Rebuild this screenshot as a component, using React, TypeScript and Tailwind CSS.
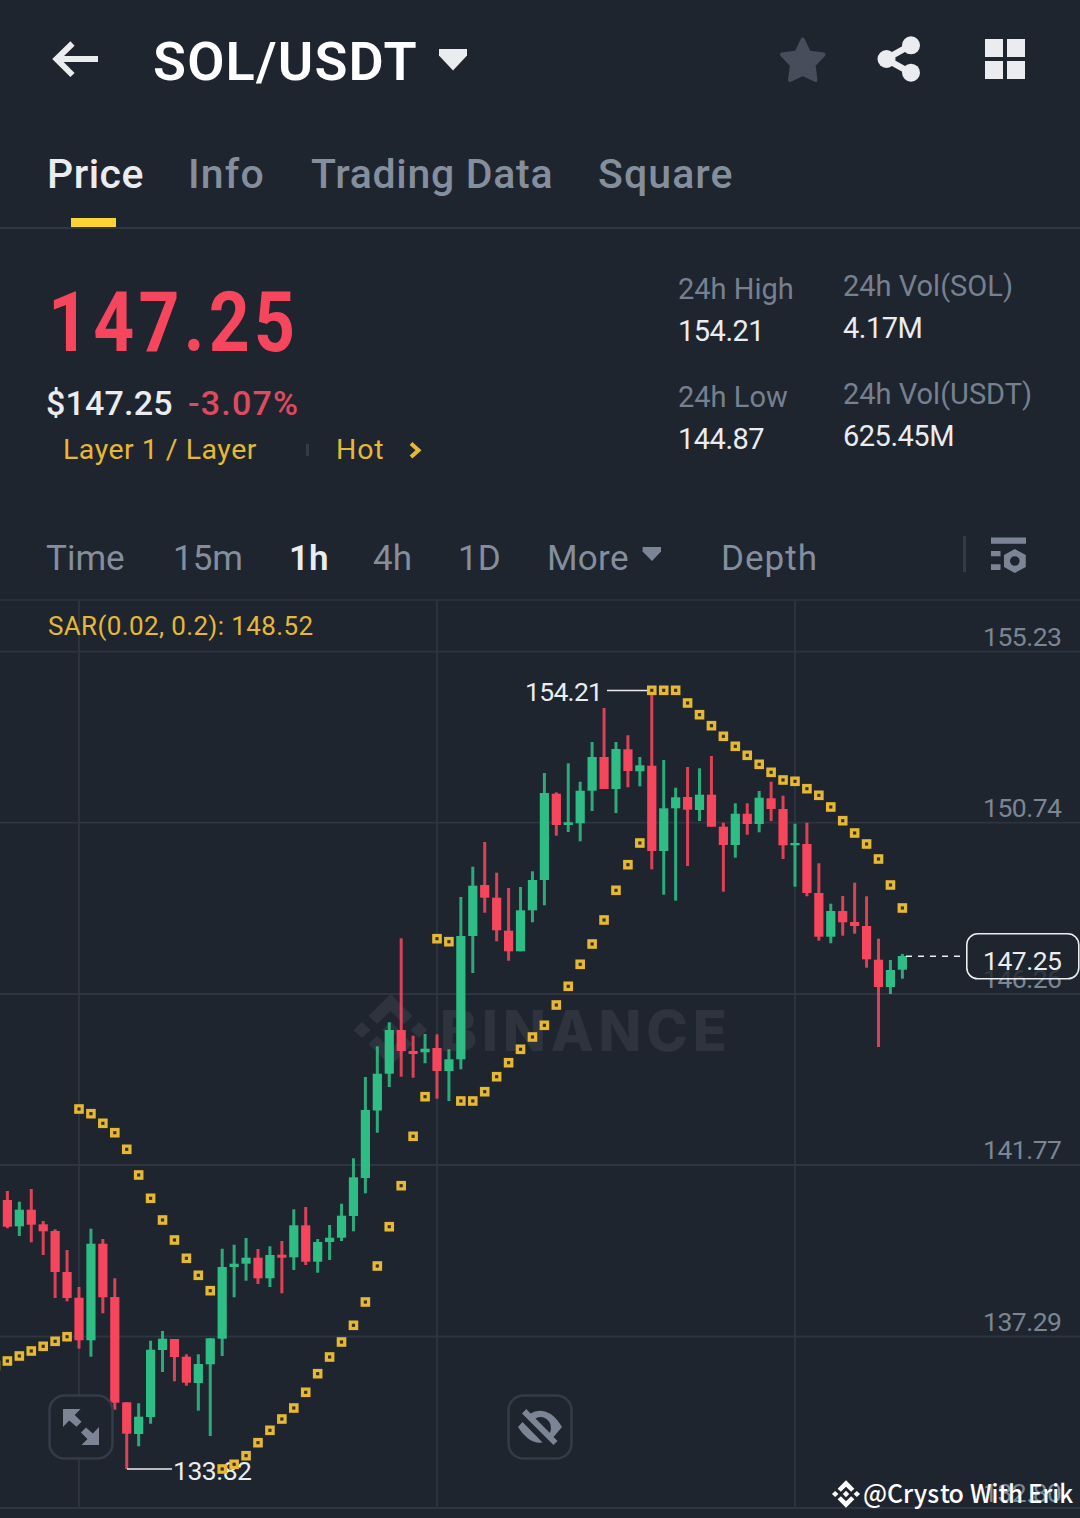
import clsx from 'clsx';

type Candle = [dir: 'u' | 'd', high: number, top: number, bottom: number, low: number];

const UP = '#2ebd85';
const DOWN = '#f6465d';
const GOLD = '#e5b935';
const BG = '#1f252f';
const GRID = '#2f3540';

const STEP = 11.933;
const xAt = (i: number) => 7.4 + STEP * i;

const candles: Candle[] = [
  ['d', 1191, 1200, 1226.7, 1228.3],
  ['u', 1201.7, 1209.7, 1226.3, 1236],
  ['d', 1189, 1209.7, 1224.7, 1242.3],
  ['d', 1221, 1224.3, 1231.3, 1255],
  ['d', 1229.3, 1231, 1272, 1298],
  ['d', 1250, 1272, 1298, 1301.3],
  ['d', 1287, 1297.7, 1340.3, 1348.7],
  ['u', 1228.7, 1243.7, 1340.3, 1356.7],
  ['d', 1239, 1243.7, 1297.3, 1313.3],
  ['d', 1278.3, 1297, 1402.7, 1409.7],
  ['d', 1402.3, 1402.3, 1433.7, 1469],
  ['u', 1403.3, 1416.7, 1434, 1446.3],
  ['u', 1340.7, 1349.7, 1417, 1423.7],
  ['u', 1331, 1338.7, 1350, 1372],
  ['d', 1339, 1339, 1357, 1381.3],
  ['d', 1354.3, 1356.7, 1382.7, 1385.7],
  ['u', 1354.3, 1364, 1383, 1410.7],
  ['u', 1338.3, 1338.3, 1364.3, 1436],
  ['u', 1248.7, 1267, 1338.7, 1356],
  ['u', 1244.7, 1263.7, 1267, 1297.3],
  ['u', 1238, 1257.7, 1263.7, 1280.7],
  ['d', 1249, 1257.7, 1278.3, 1284],
  ['u', 1246.3, 1255, 1278.3, 1287],
  ['d', 1241, 1254.7, 1257.7, 1293.3],
  ['u', 1209.3, 1225.3, 1257.3, 1270],
  ['d', 1207, 1225.3, 1261.7, 1265],
  ['u', 1239, 1242, 1261.7, 1272.7],
  ['u', 1225, 1237.7, 1242, 1260],
  ['u', 1203.7, 1215.7, 1237.7, 1241],
  ['u', 1158.3, 1177.3, 1216, 1231.3],
  ['u', 1077, 1110, 1178, 1193.3],
  ['u', 1046.3, 1073.7, 1110.5, 1132.7],
  ['u', 1022.3, 1030, 1073.7, 1087],
  ['d', 938.3, 1030, 1051, 1076.7],
  ['d', 1035.7, 1051, 1054, 1077.7],
  ['u', 1034, 1048.7, 1052.3, 1063.3],
  ['d', 1034.3, 1048, 1071, 1098.7],
  ['u', 1049.3, 1059.3, 1071, 1101],
  ['u', 897, 936, 1059.3, 1069.3],
  ['u', 866.7, 885.7, 936, 973],
  ['d', 842, 885, 897.7, 912.7],
  ['d', 872.7, 897.7, 930.3, 941.3],
  ['d', 888, 930.7, 951.3, 960.7],
  ['u', 887, 910.3, 951.3, 951.3],
  ['u', 871.3, 880, 910.3, 922.3],
  ['u', 773, 793, 880, 905.3],
  ['d', 792.3, 793.7, 825, 835.7],
  ['u', 763.3, 822.3, 825, 832],
  ['u', 781.7, 790.7, 823.3, 841.3],
  ['u', 742, 757, 790.7, 811],
  ['d', 708, 757, 789, 789],
  ['u', 742, 749, 789, 813],
  ['d', 735.3, 749.3, 771, 787.3],
  ['u', 757, 765.3, 771.3, 786.3],
  ['d', 690.7, 765.7, 851, 869.3],
  ['u', 760, 808.3, 851, 894.7],
  ['u', 787.7, 797.3, 808.3, 900.7],
  ['d', 767, 797, 809.7, 866],
  ['u', 768.3, 794.7, 810, 821],
  ['d', 756, 794.7, 826.7, 826.7],
  ['d', 822.7, 826.7, 845, 891.7],
  ['u', 803.3, 813.7, 845, 857.7],
  ['d', 803.3, 813.7, 824, 834.7],
  ['u', 791, 797.7, 824, 832.3],
  ['d', 781.7, 798.3, 809, 821],
  ['d', 795.7, 809, 845.3, 859],
  ['u', 823.7, 843, 845.3, 886.7],
  ['d', 822.7, 844, 893, 896.3],
  ['d', 863.3, 893, 936.7, 940.7],
  ['u', 903.7, 911, 936.7, 943.3],
  ['d', 896, 911, 922.3, 935.7],
  ['d', 882.7, 922, 926, 933.7],
  ['d', 896.3, 926, 959.3, 967.7],
  ['d', 938.7, 959.7, 987, 1047],
  ['u', 960, 970, 987, 994],
  ['u', 954, 956, 969.7, 978.7],
];

// parabolic SAR, starting one step left of the first candle
const sar = [
  1365.5, 1361, 1356, 1351, 1346.3, 1341.3, 1336.7,
  1109, 1113.7, 1123.3, 1132.7, 1149.3, 1175, 1198.3, 1220, 1240, 1258.3, 1275.3, 1290.7,
  1469, 1464.3, 1455.7, 1442.7, 1430.3, 1419, 1408, 1392.3, 1373.7, 1357, 1342, 1325.3, 1302, 1266, 1226.7, 1185.7, 1136.3, 1096.7,
  938.7, 941.7,
  1101, 1101, 1091.7, 1076.7, 1062.7, 1049.3, 1037, 1025.3, 1005, 986.3, 964.3, 944, 920, 890.3, 864.7, 843,
  690.3, 690.3, 690.3, 703, 714.7, 725.7, 736.3, 746.3, 755.3, 764.3, 772.3, 780, 781.3, 788.7, 795.3, 807, 820.7, 833, 844, 859, 885, 908,
];

const gridLines = [
  { y: 651.7, label: '155.23' },
  { y: 822.7, label: '150.74' },
  { y: 994, label: '146.26' },
  { y: 1165, label: '141.77' },
  { y: 1336.5, label: '137.29' },
  { y: 1508, label: '132.80' },
];

const tabs = [
  { label: 'Price', cls: 'w-[141px] tracking-[0.5px]' },
  { label: 'Info', cls: 'w-[123px] tracking-[1.2px]' },
  { label: 'Trading Data', cls: 'w-[287px] tracking-[0.7px]' },
  { label: 'Square', cls: 'tracking-[1.1px]' },
];

function Header() {
  return (
    <header className="flex h-[118px] items-center pl-[50px] pr-[55px]">
      <svg width="50" height="44" viewBox="50 37 50 44" fill="none" stroke="#eaecef" strokeWidth="6">
        <path d="M98 59H57M72.5 43.5L56.5 59L72.5 75" />
      </svg>
      <h1 className="ml-[53px] mt-1.5 w-[264px] whitespace-nowrap text-[54px] leading-none font-semibold tracking-[1.2px] text-white">SOL/USDT</h1>
      <svg className="ml-[21px]" width="30" height="24" viewBox="438 47 30 24" fill="#eaecef">
        <path d="M439 49H467V55.5L453 70.5L439 55.5Z" />
      </svg>
      <div className="ml-auto flex items-center">
        <svg width="48" height="48" viewBox="779 35 48 48" fill="#474d5b" stroke="#474d5b" strokeWidth="4" strokeLinejoin="round">
          <path d="M802.7 39.5L809 52.5L823.5 54.5L813.500 65L815.5 80L802.7 74L790 80L792 65L782 54.5L796.5 52.5Z" />
        </svg>
        <svg className="ml-[49px]" width="46" height="48" viewBox="876 35 46 48" fill="#eaecef" stroke="#eaecef">
          <path d="M911 45L886 59L911 73" fill="none" strokeWidth="6.5" />
          <circle cx="911" cy="45.3" r="9" stroke="none" />
          <circle cx="886.5" cy="59" r="9" stroke="none" />
          <circle cx="911" cy="72.7" r="9" stroke="none" />
        </svg>
        <div className="ml-[63px] grid grid-cols-2 gap-1">
          {[0, 1, 2, 3].map((n) => <span key={n} className="size-[18px] bg-[#eaecef]" />)}
        </div>
      </div>
    </header>
  );
}

function Tabs() {
  return (
    <nav className="flex h-[111px] border-b-2 border-[#303742] pl-[47px] pt-9 text-[41px] leading-10 font-medium">
      {tabs.map((t, i) => (
        <div key={t.label} className={clsx('whitespace-nowrap', t.cls, i === 0 ? 'text-[#eaecef]' : 'text-[#848e9c]')}>
          {t.label}
          {i === 0 && <div className="ml-6 mt-6 h-[9px] w-[45px] bg-[#fcd535]" />}
        </div>
      ))}
    </nav>
  );
}

function Stat({ label, value }: { label: string; value: string }) {
  return (
    <div className="whitespace-nowrap text-[29px] leading-[42px]">
      <div className="text-[#76808f]">{label}</div>
      <div className="tracking-[-0.5px] text-[#eaecef]">{value}</div>
    </div>
  );
}

function Summary() {
  return (
    <section className="flex h-[287px]">
      <div className="w-[678px] pl-12 pt-[54px]">
        <div className="origin-left scale-x-[0.86] text-[83px] leading-[80px] font-bold tracking-[5px] text-[#f6465d]">147.25</div>
        <div className="-ml-0.5 mt-5 flex text-[34px] leading-10 font-medium">
          <span className="w-[142px] tracking-[0.2px] text-[#eaecef]">$147.25</span>
          <span className="tracking-[1.2px] text-[#e04a60]">-3.07%</span>
        </div>
        <div className="mt-[11px] flex items-center pl-[15px] text-[28.5px] leading-8 text-[#e5b935]">
          <span className="w-[243px] tracking-[0.5px]">Layer 1 / Layer</span>
          <span className="h-3 w-[3px] bg-[#343b47]" />
          <span className="ml-[27px] w-[73px] tracking-[0.8px]">Hot</span>
          <svg width="14" height="20" viewBox="409 439 14 20" fill="none" stroke="#e5b935" strokeWidth="4">
            <path d="M411 442.5L418.500 449.2L411 456" />
          </svg>
        </div>
      </div>
      <div className="flex w-[165px] flex-col gap-6 pt-[39px]">
        <Stat label="24h High" value="154.21" />
        <Stat label="24h Low" value="144.87" />
      </div>
      <div className="flex flex-col gap-6 pt-9">
        <Stat label="24h Vol(SOL)" value="4.17M" />
        <Stat label="24h Vol(USDT)" value="625.45M" />
      </div>
    </section>
  );
}

function Intervals() {
  return (
    <div className="flex h-[85px] items-center border-b-2 border-[#2b313c] pl-[46px] pr-[53px] pt-0.5 text-[35px] leading-10 text-[#848e9c]">
      <span className="w-[127px]">Time</span>
      <span className="w-[116px]">15m</span>
      <span className="w-[84px] font-semibold text-[#eaecef]">1h</span>
      <span className="w-[85px]">4h</span>
      <span className="w-[89px]">1D</span>
      <span className="w-[95px] tracking-[0.3px]">More</span>
      <svg className="-mt-2.5" width="20" height="16" viewBox="642 546 20 16" fill="#7c8595">
        <path d="M642.6 547H661V551.5L652 561L642.6 551.5Z" />
      </svg>
      <span className="ml-[59px] tracking-[1px]">Depth</span>
      <span className="ml-auto mr-6 -mt-2.5 h-9 w-[3px] bg-[#343b47]" />
      <svg className="-mt-2" width="37" height="38" viewBox="990 536 37 38" fill="#7c8595">
        <path d="M991 537.5H1026V543.7H991ZM991 551H1000.5V556.3H991ZM991 564.3H1000.5V570H991Z" />
        <path fillRule="evenodd" d="M1014.8 549L1025.8 555V567L1014.8 573L1004 567V555ZM1014.8 556.2A4.8 4.8 0 1 0 1014.8 565.8A4.8 4.8 0 1 0 1014.8 556.2Z" />
      </svg>
    </div>
  );
}

function BinanceMark() {
  return (
    <path d="M0 -36L22 -14L13.500 -6L0 -19L-13.500 -6L-22 -14ZM0 36L22 14L13.500 6L0 19L-13.500 6L-22 14ZM-37 0L-28.500 -8L-20 0L-28.500 8ZM37 0L28.500 -8L20 0L28.500 8ZM0 -8.500L8.500 0L0 8.500L-8.500 0Z" />
  );
}

function Chart() {
  return (
    <svg className="block" width="1080" height="917" viewBox="0 601 1080 917" fontFamily="Roboto, 'Liberation Sans', sans-serif" fontSize="26.5">
      <g stroke={GRID} strokeWidth="1.8">
        {gridLines.map((g) => <line key={g.y} x1="0" x2="1080" y1={g.y} y2={g.y} />)}
        {[6, 36, 66].map((i) => <line key={i} x1={xAt(i)} x2={xAt(i)} y1="601" y2="1508" />)}
      </g>

      <g fill="#2e333e">
        <g transform="translate(390.5 1030)"><BinanceMark /></g>
        <text x="440" y="1050.5" fontSize="56" fontWeight="800" fontFamily="Inter, sans-serif" textLength="287">BINANCE</text>
      </g>

      <text x="48" y="635" fontSize="26" fill={GOLD} textLength="265">SAR(0.02, 0.2): 148.52</text>

      <g fill="#7c8594">
        {gridLines.map((g) => <text key={g.label} x="983" y={g.y - 5.7} textLength="79">{g.label}</text>)}
      </g>

      {candles.map(([dir, high, top, bottom, low], i) => (
        <g key={i} fill={dir === 'u' ? UP : DOWN}>
          <rect x={xAt(i) - 1.5} y={high} width="3" height={low - high} opacity="0.88" />
          <rect x={xAt(i) - 4.6} y={top} width="9.2" height={bottom - top} />
        </g>
      ))}

      <g stroke="#eaecef" strokeWidth="1.6">
        <line x1="607" x2="652" y1="690.5" y2="690.5" />
        <line x1="127" x2="172" y1="1469" y2="1469" />
        <line x1="906" x2="962" y1="956.3" y2="956.3" strokeDasharray="6 6" />
      </g>
      <g fill="#eaecef">
        <text x="525" y="701.3" textLength="78">154.21</text>
        <text x="173" y="1480" textLength="79">133.82</text>
      </g>

      <g fill="#3a2f14" stroke={GOLD} strokeWidth="3.2">
        {sar.map((y, i) => <rect key={i} x={xAt(i - 1) - 3.2} y={y - 3.2} width="6.4" height="6.4" />)}
      </g>

      <rect x="966.8" y="933.8" width="112" height="45" rx="11" fill={BG} fillOpacity="0.8" stroke="#eaecef" strokeWidth="1.6" />
      <text x="983" y="970" fill="#eaecef" textLength="79">147.25</text>

      <g fill={BG} stroke="#343a47" strokeWidth="2.6">
        <rect x="49.5" y="1395.5" width="63" height="63" rx="15" />
        <rect x="508.5" y="1395.5" width="63" height="63" rx="15" />
      </g>
      <g fill="#7c8595">
        <path d="M63 1409H80.5L74.7 1415L81.5 1421.8L76.5 1426.800L69.2 1420.5L63 1427Z" />
        <path d="M99 1445H81.5L87.5 1439L81 1432.5L86 1427.5L92.8 1433.5L99 1427Z" />
      </g>
      <g fill="#7c8595">
        <path d="M526.3 1409L530.5 1413.5Q537 1409.5 545 1411.5Q555 1414.5 562 1427L553.5 1437L557.5 1441L553.5 1445L522 1413.5ZM535.5 1418.5L550 1433Q553 1424 546.5 1419Q541.5 1415.5 535.5 1418.5Z" fillRule="evenodd" />
        <path d="M522.5 1422L542.5 1442.5Q534 1443.5 528 1438.5Q522 1434 518 1427Z" />
      </g>

      <g fill="#fff" fontFamily="'Noto Sans CJK SC', sans-serif" fontSize="25">
        <g transform="translate(846 1494) scale(0.38)"><BinanceMark /></g>
        <text x="863" y="1503" fontWeight="500" textLength="76" lengthAdjust="spacingAndGlyphs">@Crys</text>
        <text x="940" y="1503" fontWeight="500" textLength="24">to</text>
        <text x="970" y="1503" fontWeight="500" textLength="53" lengthAdjust="spacingAndGlyphs">With</text>
        <text x="1028" y="1503" fontWeight="500" textLength="45" lengthAdjust="spacingAndGlyphs">Erik</text>
      </g>
    </svg>
  );
}

export default function App() {
  return (
    <div className="w-[1080px] overflow-hidden bg-[#1f252f] font-['Roboto','Liberation_Sans',sans-serif]">
      <Header />
      <Tabs />
      <Summary />
      <Intervals />
      <Chart />
    </div>
  );
}
